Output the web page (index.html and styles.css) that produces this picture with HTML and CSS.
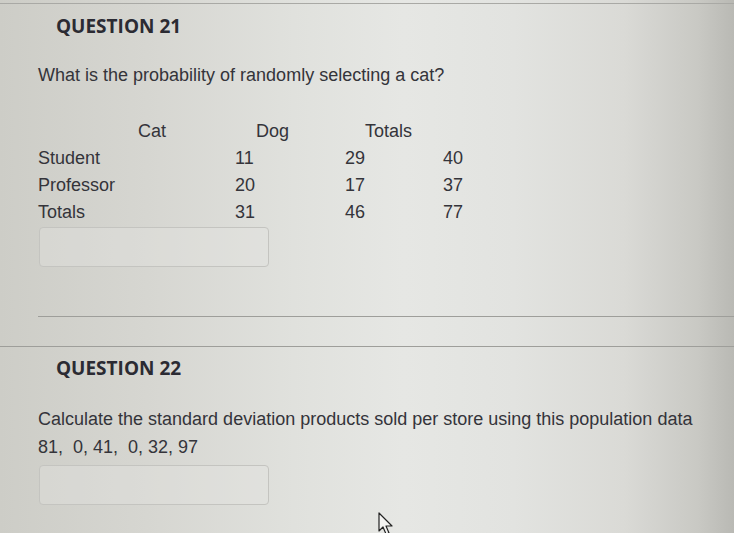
FILE: index.html
```html
<!DOCTYPE html>
<html>
<head>
<meta charset="utf-8">
<link rel="stylesheet" href="styles.css">
</head>
<body>
<div class="page">
  <div class="topline"></div>
  <section class="question q21">
    <h2 class="qtitle">QUESTION 21</h2>
    <p class="qtext">What is the probability of randomly selecting a cat?</p>
    <div class="table">
      <div class="thead">
        <span></span><span>Cat</span><span>Dog</span><span>Totals</span>
      </div>
      <div class="trow"><span>Student</span><span>11</span><span>29</span><span>40</span></div>
      <div class="trow"><span>Professor</span><span>20</span><span>17</span><span>37</span></div>
      <div class="trow"><span>Totals</span><span>31</span><span>46</span><span>77</span></div>
    </div>
    <div class="answer"></div>
  </section>
  <div class="divider inner"></div>
  <div class="divider full"></div>
  <section class="question q22">
    <h2 class="qtitle">QUESTION 22</h2>
    <p class="qtext">Calculate the standard deviation products sold per store using this population data</p>
    <p class="qdata">81,&nbsp; 0, 41,&nbsp; 0, 32, 97</p>
    <div class="answer"></div>
  </section>
  <svg class="cursor" width="16" height="24" viewBox="0 0 16 24">
    <path d="M1 1 L1 19 L5 15 L8 22 L11 21 L8 14 L14 14 Z" fill="#f4f4f2" stroke="#222" stroke-width="1.2" stroke-linejoin="round"/>
  </svg>
</div>
</body>
</html>
```

FILE: styles.css
```css
html, body {
  margin: 0;
  padding: 0;
}
body {
  width: 734px;
  height: 533px;
  overflow: hidden;
  background: linear-gradient(90deg, #cdcdc7 0%, #d6d6d1 20%, #e0e1dd 40%, #e6e7e4 55%, #e2e3e0 70%, #dadad6 85%, #c9c9c4 95%, #b9b9b4 100%);
  font-family: "Liberation Sans", Arial, sans-serif;
  color: #34343a;
}
.page {
  position: relative;
  height: 533px;
}
.topline {
  height: 3px;
  border-bottom: 1px solid #a9a9a5;
}
.qtitle {
  margin: 0;
  font-family: "Open Sans", sans-serif;
  font-weight: 700;
  font-size: 19px;
  line-height: 24px;
  color: #2b2b33;
  padding-left: 56px;
}
.q21 .qtitle {
  margin-top: 10px;
}
.qtext, .qdata {
  margin: 0;
  font-size: 18px;
  line-height: 22px;
  padding-left: 38px;
}
.q21 .qtext {
  margin-top: 26px;
}
.table {
  margin-top: 32px;
  padding-left: 38px;
  font-size: 18px;
}
.thead, .trow {
  display: grid;
  line-height: 27px;
  height: 27px;
}
.thead {
  grid-template-columns: 100px 118px 109px auto;
}
.trow {
  grid-template-columns: 197px 110px 98px auto;
}
.answer {
  width: 228px;
  height: 38px;
  margin-left: 39px;
  border: 1px solid #c4c4c0;
  border-radius: 4px;
  background: rgba(230, 230, 227, 0.35);
}
.q21 .answer {
  margin-top: 1px;
}
.divider {
  height: 0;
  border-top: 1px solid #9e9e9a;
}
.divider.inner {
  margin-top: 49px;
  margin-left: 38px;
}
.divider.full {
  margin-top: 29px;
}
.q22 .qtitle {
  margin-top: 9px;
}
.q22 .qtext {
  margin-top: 28px;
}
.q22 .qdata {
  margin-top: 6px;
}
.q22 .answer {
  margin-top: 7px;
}
.cursor {
  position: absolute;
  left: 378px;
  top: 512px;
}
```
